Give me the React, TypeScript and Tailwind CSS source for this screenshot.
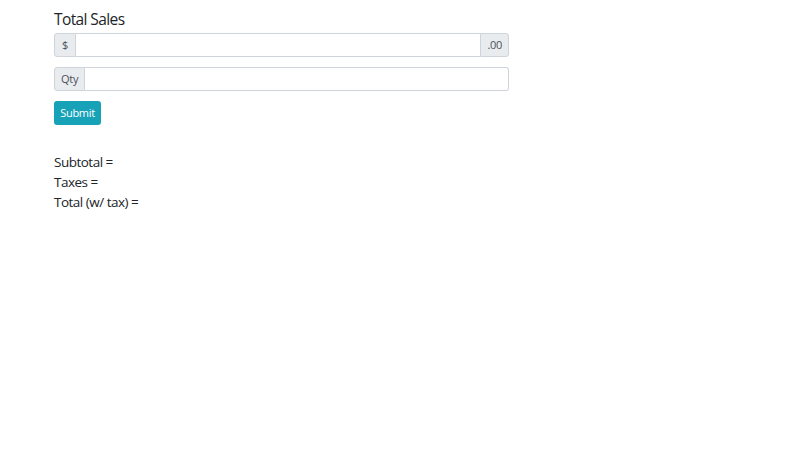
export default function App() {
  return (
    <div className="min-h-[450px] bg-white text-[#212529]" style={{ fontFamily: '"Open Sans", "Noto Sans", sans-serif' }}>
      <div className="w-[455px] ml-[54px] pt-[8px]">
        <h5 className="text-[15.5px] leading-[22px] tracking-[-0.6px] mb-[3px]">Total Sales</h5>
        <div className="flex h-[24px] text-[11px]">
          <span className="flex items-center px-[7px] bg-[#e9ecef] border border-[#ced4da] rounded-l-[3px] text-[#495057]">$</span>
          <input className="flex-1 border-y border-[#ced4da] outline-none" />
          <span className="flex items-center px-[6px] bg-[#e9ecef] border border-[#ced4da] rounded-r-[3px] text-[#495057] tracking-[-0.3px]">.00</span>
        </div>
        <div className="flex h-[24px] text-[11px] mt-[10px]">
          <span className="flex items-center px-[6px] bg-[#e9ecef] border border-[#ced4da] rounded-l-[3px] text-[#495057] tracking-[-0.3px]">Qty</span>
          <input className="flex-1 border-y border-r border-[#ced4da] rounded-r-[3px] outline-none" />
        </div>
        <button className="mt-[10px] h-[24px] w-[47px] bg-[#17a2b8] text-white text-[11px] tracking-[-0.3px] rounded-[3px]">Submit</button>
        <div className="mt-[27px] text-[13.5px] leading-[20px] tracking-[-0.5px]">
          <div>Subtotal =</div>
          <div>Taxes =</div>
          <div>Total (w/ tax) =</div>
        </div>
      </div>
    </div>
  );
}
